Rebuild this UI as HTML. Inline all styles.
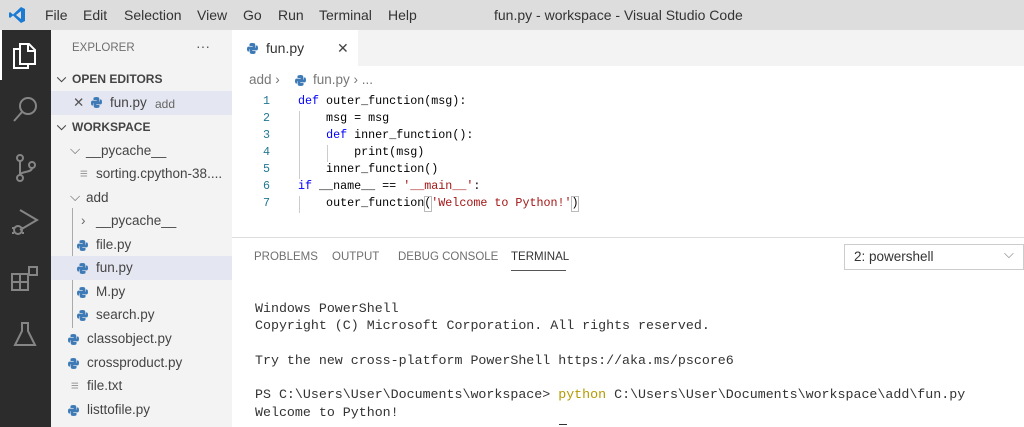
<!DOCTYPE html>
<html><head><style>
*{margin:0;padding:0;box-sizing:border-box}
body{width:1024px;height:427px;overflow:hidden;background:#fff;font-family:"Liberation Sans",sans-serif;position:relative}
.abs{position:absolute}
.t{position:absolute;white-space:pre}
#title{left:0;top:0;width:1024px;height:30px;background:#dddddd}
.menu{top:7px;font-size:14px;color:#333}
#act{left:0;top:30px;width:51px;height:397px;background:#2c2c2c}
#side{left:51px;top:30px;width:181px;height:397px;background:#f3f3f3}
.s{font-size:13.5px;color:#444}
.h{font-size:12px;font-weight:bold;color:#444}
.py{position:absolute;width:11px;height:11px}
.code{font-family:"Liberation Mono",monospace;font-size:11.7px;color:#000}
.term{font-family:"Liberation Mono",monospace;font-size:13.3px;color:#333}
.k{color:#0000ff}.str{color:#a31515}
.ln{font-family:"Liberation Mono",monospace;font-size:11.7px;color:#237893}
.tab{font-size:11.5px;color:#6f6f6f;top:251px}
</style></head><body>
<div id="title" class="abs"></div>
<svg class="abs" style="left:8px;top:6px" width="18" height="18" viewBox="0 0 18 18"><path d="M13 1 L17 3 V15 L13 17 L5 9.5 L2 12 L1 11 V7 L2 6 L5 8.5 Z M13 5 L8 9 L13 13 Z" fill="#1a7ad4" fill-rule="evenodd"/></svg>
<span class="t menu" style="left:45px">File</span>
<span class="t menu" style="left:83px">Edit</span>
<span class="t menu" style="left:124px">Selection</span>
<span class="t menu" style="left:197px">View</span>
<span class="t menu" style="left:243px">Go</span>
<span class="t menu" style="left:278px">Run</span>
<span class="t menu" style="left:319px">Terminal</span>
<span class="t menu" style="left:388px">Help</span>
<span class="t menu" style="left:494px">fun.py - workspace - Visual Studio Code</span>
<div id="act" class="abs"></div>
<div class="abs" style="left:0;top:30px;width:2px;height:50px;background:#fff"></div>
<svg class="abs" style="left:11px;top:40px" width="28" height="30" viewBox="0 0 28 30" fill="none" stroke="#fff" stroke-width="2"><path d="M9 4 H18 L24 10 V24 H9 Z"/><path d="M17 4 V11 H24"/><path d="M9 9 H3 V28 H17 V24"/></svg>
<svg class="abs" style="left:12px;top:95px" width="28" height="30" viewBox="0 0 28 30" fill="none" stroke="#858585" stroke-width="2"><circle cx="16" cy="11" r="8"/><path d="M10 17 L2 26"/></svg>
<svg class="abs" style="left:14px;top:153px" width="24" height="30" viewBox="0 0 24 30" fill="none" stroke="#858585" stroke-width="2"><circle cx="6" cy="5" r="3"/><circle cx="6" cy="25" r="3"/><circle cx="18" cy="12" r="3"/><path d="M6 8 V22 M18 15 C18 20 6 18 6 22"/></svg>
<svg class="abs" style="left:10px;top:208px" width="30" height="30" viewBox="0 0 30 30" fill="none" stroke="#858585" stroke-width="2"><path d="M10 2 L27 12 L10 22"/><circle cx="8" cy="22" r="4"/><path d="M2 20 H4 M2 25 H4 M12 20 H14 M12 25 H14"/></svg>
<svg class="abs" style="left:10px;top:264px" width="30" height="30" viewBox="0 0 30 30" fill="none" stroke="#858585" stroke-width="2"><rect x="2" y="10" width="8" height="8"/><rect x="10" y="10" width="8" height="8"/><rect x="2" y="18" width="8" height="8"/><rect x="10" y="18" width="8" height="8"/><rect x="19" y="3" width="8" height="8"/></svg>
<svg class="abs" style="left:12px;top:321px" width="26" height="26" viewBox="0 0 26 26" fill="none" stroke="#858585" stroke-width="2"><path d="M9 2 H17 M10 2 V10 L3 24 H23 L16 10 V2"/></svg>
<div id="side" class="abs"></div>
<span class="t" style="left:72px;top:42px;font-size:11.5px;color:#6f6f6f">EXPLORER</span>
<span class="t" style="left:196px;top:38px;font-size:14px;color:#555">···</span>
<span class="t h" style="left:57px;top:71px">⌵</span>
<span class="t h" style="left:72px;top:72px">OPEN EDITORS</span>
<div class="abs" style="left:51px;top:91px;width:181px;height:24px;background:#e4e6f1"></div>
<span class="t s" style="left:73px;top:95px;color:#555">✕</span>
<span class="t s" style="left:110px;top:95px">fun.py</span>
<span class="t" style="left:155px;top:97px;font-size:12px;color:#666">add</span>
<span class="t h" style="left:57px;top:119px">⌵</span>
<span class="t h" style="left:72px;top:120px">WORKSPACE</span>
<span class="t s" style="left:70px;top:142px;color:#666">⌵</span>
<span class="t s" style="left:86px;top:143px">__pycache__</span>
<span class="t s" style="left:80px;top:166px;color:#999">≡</span>
<span class="t s" style="left:96px;top:166px">sorting.cpython-38....</span>
<span class="t s" style="left:70px;top:189px;color:#666">⌵</span>
<span class="t s" style="left:86px;top:190px">add</span>
<div class="abs" style="left:72px;top:208px;width:1px;height:120px;background:#aaa"></div>
<span class="t s" style="left:81px;top:213px;color:#666">›</span>
<span class="t s" style="left:96px;top:213px">__pycache__</span>
<span class="t s" style="left:96px;top:237px">file.py</span>
<div class="abs" style="left:51px;top:256px;width:181px;height:24px;background:#e4e6f1"></div>
<span class="t s" style="left:96px;top:260px">fun.py</span>
<span class="t s" style="left:96px;top:284px">M.py</span>
<span class="t s" style="left:96px;top:307px">search.py</span>
<span class="t s" style="left:87px;top:331px">classobject.py</span>
<span class="t s" style="left:87px;top:355px">crossproduct.py</span>
<span class="t s" style="left:71px;top:378px;color:#999">≡</span>
<span class="t s" style="left:87px;top:378px">file.txt</span>
<span class="t s" style="left:87px;top:402px">listtofile.py</span>
<svg width="0" height="0" style="position:absolute"><defs><g id="p"><path d="M5.5 0 C2 0 2.5 1.5 2.5 1.5 V3 H5.7 V3.6 H1.5 C1.5 3.6 0 3.4 0 6 C0 8.6 1.3 8.5 1.3 8.5 H2.3 V7.2 C2.3 7.2 2.2 5.8 3.6 5.8 H6.8 C6.8 5.8 8.2 5.8 8.2 4.5 V1.5 C8.2 1.5 8.4 0 5.5 0 Z M11 5 C11 2.4 9.7 2.5 9.7 2.5 H8.7 V3.8 C8.7 3.8 8.8 5.2 7.4 5.2 H4.2 C4.2 5.2 2.8 5.2 2.8 6.5 V9.5 C2.8 9.5 2.6 11 5.5 11 C9 11 8.5 9.5 8.5 9.5 V8 H5.3 V7.4 H9.5 C9.5 7.4 11 7.6 11 5 Z" fill="#3d7ab6"/></g></defs></svg>
<svg class="py" style="left:91px;top:97px"><use href="#p"/></svg>
<svg class="py" style="left:77px;top:240px"><use href="#p"/></svg>
<svg class="py" style="left:77px;top:263px"><use href="#p"/></svg>
<svg class="py" style="left:77px;top:287px"><use href="#p"/></svg>
<svg class="py" style="left:77px;top:310px"><use href="#p"/></svg>
<svg class="py" style="left:68px;top:334px"><use href="#p"/></svg>
<svg class="py" style="left:68px;top:358px"><use href="#p"/></svg>
<svg class="py" style="left:68px;top:405px"><use href="#p"/></svg>
<div class="abs" style="left:232px;top:30px;width:792px;height:36px;background:#f3f3f3"></div>
<div class="abs" style="left:232px;top:30px;width:126px;height:36px;background:#fff"></div>
<svg class="py" style="left:247px;top:43px"><use href="#p"/></svg>
<span class="t" style="left:266px;top:40px;font-size:14px;color:#333">fun.py</span>
<span class="t" style="left:337px;top:40px;font-size:14px;color:#444">✕</span>
<span class="t" style="left:249px;top:72px;font-size:13.5px;color:#777">add ›</span>
<svg class="py" style="left:295px;top:75px"><use href="#p"/></svg>
<span class="t" style="left:313px;top:72px;font-size:13.5px;color:#777">fun.py › ...</span>
<span class="t ln" style="left:263px;top:93px;line-height:17px">1
2
3
4
5
6
7</span>
<div class="abs" style="left:299px;top:111px;width:1px;height:68px;background:#ccc"></div>
<div class="abs" style="left:327px;top:145px;width:1px;height:17px;background:#ccc"></div>
<div class="abs" style="left:299px;top:196px;width:1px;height:17px;background:#ccc"></div>
<span class="t code" style="left:298px;top:93px;line-height:17px"><span class="k">def</span> outer_function(msg):
    msg = msg
    <span class="k">def</span> inner_function():
        print(msg)
    inner_function()
<span class="k">if</span> __name__ == <span class="str">'__main__'</span>:
    outer_function(<span class="str">'Welcome to Python!'</span>)</span>
<div class="abs" style="left:424px;top:196px;width:8px;height:16px;border:1px solid #bbb"></div>
<div class="abs" style="left:571px;top:196px;width:8px;height:16px;border:1px solid #bbb"></div>
<div class="abs" style="left:232px;top:237px;width:792px;height:1px;background:#ddd"></div>
<span class="t tab" style="left:254px">PROBLEMS</span>
<span class="t tab" style="left:332px">OUTPUT</span>
<span class="t tab" style="left:398px">DEBUG CONSOLE</span>
<span class="t tab" style="left:511px;color:#333">TERMINAL</span>
<div class="abs" style="left:511px;top:270px;width:55px;height:1px;background:#555"></div>
<div class="abs" style="left:844px;top:244px;width:180px;height:26px;border:1px solid #ccc;background:#fff"></div>
<span class="t" style="left:854px;top:249px;font-size:13.5px;color:#333">2: powershell</span>
<span class="t" style="left:1004px;top:246px;font-size:13px;color:#777">⌵</span>
<span class="t term" style="left:255px;top:300px;line-height:17.3px">Windows PowerShell
Copyright (C) Microsoft Corporation. All rights reserved.

Try the new cross-platform PowerShell https://aka.ms/pscore6

PS C:\Users\User\Documents\workspace&gt; <span style="color:#b59a00">python</span> C:\Users\User\Documents\workspace\add\fun.py
Welcome to Python!</span>
<div class="abs" style="left:559px;top:424px;width:8px;height:1px;background:#333"></div>
</body></html>
